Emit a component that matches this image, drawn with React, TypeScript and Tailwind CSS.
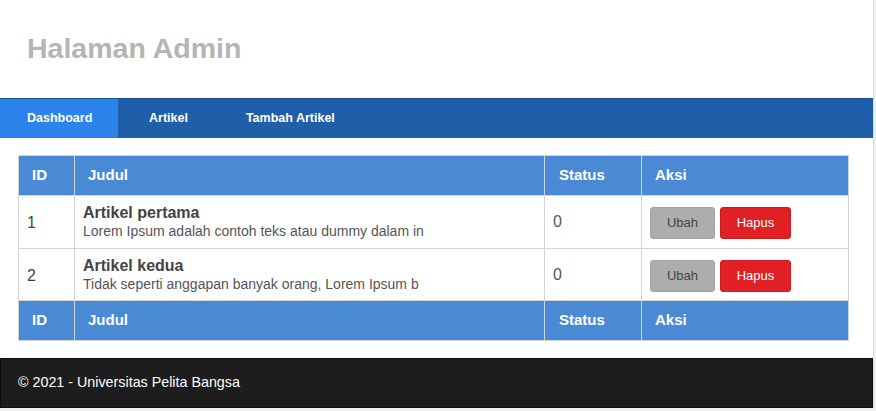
import React from 'react';

const rows = [
  { id: 1, judul: 'Artikel pertama', isi: 'Lorem Ipsum adalah contoh teks atau dummy dalam in', status: 0 },
  { id: 2, judul: 'Artikel kedua', isi: 'Tidak seperti anggapan banyak orang, Lorem Ipsum b', status: 0 },
];

const HeadRow: React.FC = () => (
  <tr className="h-[40px] bg-[#4a8ad4] text-white font-bold text-[15px]">
    <th className="border border-[#cfd6de] px-[13px] text-left">ID</th>
    <th className="border border-[#cfd6de] px-[13px] text-left">Judul</th>
    <th className="border border-[#cfd6de] px-[14px] text-left">Status</th>
    <th className="border border-[#cfd6de] px-[13px] text-left">Aksi</th>
  </tr>
);

export default function App() {
  return (
    <div className="min-h-[411px] bg-[#efefef] font-['Liberation_Sans',Arial,sans-serif]">
      <div className="w-[874px] bg-white border-r border-[#dcdcdc]">
        {/* Header */}
        <header className="h-[98px] flex items-center px-[27px]">
          <h1 className="text-[28.5px] font-bold text-[#b5b5b5] mt-[-1px]">Halaman Admin</h1>
        </header>

        {/* Nav */}
        <nav className="h-[40px] bg-[#1f5fa9] flex text-[12.5px] font-bold text-white border-t border-[#1a5090]">
          <a className="flex items-center w-[118px] pl-[27px] bg-[#2b84ea]">Dashboard</a>
          <a className="flex items-center px-[31px]">Artikel</a>
          <a className="flex items-center px-[27px]">Tambah Artikel</a>
        </nav>

        {/* Content */}
        <section className="px-[18px] pt-[17px] pb-[17px]">
          <table className="w-[831px] border-collapse">
            <thead>
              <HeadRow />
            </thead>
            <tbody>
              {rows.map((r, i) => (
                <tr key={r.id} className={i === 0 ? 'h-[53px]' : 'h-[52px]'}>
                  <td className="w-[56px] border border-[#d4d4d4] px-[8px] text-[16px] text-[#444] pt-[2px]">{r.id}</td>
                  <td className="w-[470px] border border-[#d4d4d4] px-[8px] leading-tight">
                    <div className="text-[16px] font-bold text-[#444]">{r.judul}</div>
                    <div className="text-[14px] text-[#555]">{r.isi}</div>
                  </td>
                  <td className="w-[97px] border border-[#d4d4d4] px-[8px] text-[16px] text-[#4e5a6e]">{r.status}</td>
                  <td className="border border-[#d4d4d4] px-[8px]">
                    <div className="flex gap-[5px] pt-[2px]">
                      <button className="w-[65px] h-[32px] rounded-[3px] bg-[#adadad] border border-[#a3a3a3] text-[13px] text-[#444]">Ubah</button>
                      <button className="w-[71px] h-[32px] rounded-[3px] bg-[#e02024] border border-[#d11a1e] text-[13px] text-white">Hapus</button>
                    </div>
                  </td>
                </tr>
              ))}
            </tbody>
            <tfoot>
              <HeadRow />
            </tfoot>
          </table>
        </section>

        {/* Footer */}
        <footer className="h-[50px] bg-[#1d1d1d] border border-[#0e0e0e] flex items-center px-[17px] text-[14.3px] text-white">
          © 2021 - Universitas Pelita Bangsa
        </footer>
      </div>
    </div>
  );
}
